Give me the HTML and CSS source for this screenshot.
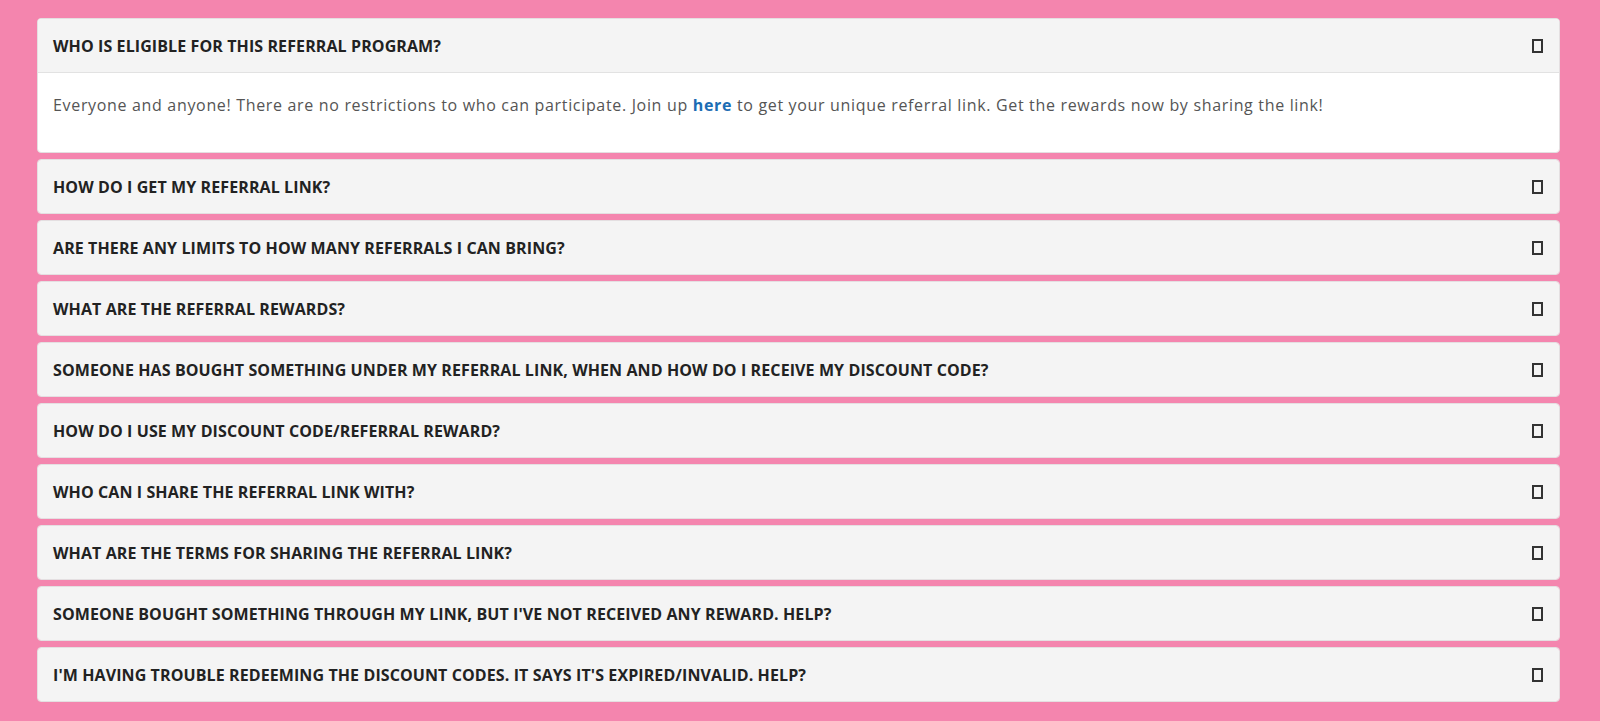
FILE: index.html
```html
<!DOCTYPE html>
<html lang="en">
	<head>
		<meta charset="utf-8" />
		<title>Referral program FAQ</title>
		<meta name="viewport" content="width=device-width, initial-scale=1.0">
		<link rel="stylesheet" href="styles.css">
	</head>
	<body>
		<div id="faq">
			<div class="card open">
				<div class="card-head">
					<span class="question">Who is eligible for this referral program?</span>
					<span class="toggle"></span>
				</div>
				<div class="card-body">
					<p>Everyone and anyone! There are no restrictions to who can participate. Join up <a href="#">here</a> to get your unique referral link. Get the rewards now by sharing the link!</p>
				</div>
			</div>
			<div class="card">
				<div class="card-head">
					<span class="question">How do I get my referral link?</span>
					<span class="toggle"></span>
				</div>
			</div>
			<div class="card">
				<div class="card-head">
					<span class="question">Are there any limits to how many referrals I can bring?</span>
					<span class="toggle"></span>
				</div>
			</div>
			<div class="card">
				<div class="card-head">
					<span class="question">What are the referral rewards?</span>
					<span class="toggle"></span>
				</div>
			</div>
			<div class="card">
				<div class="card-head">
					<span class="question">Someone has bought something under my referral link, when and how do I receive my discount code?</span>
					<span class="toggle"></span>
				</div>
			</div>
			<div class="card">
				<div class="card-head">
					<span class="question">How do I use my discount code/referral reward?</span>
					<span class="toggle"></span>
				</div>
			</div>
			<div class="card">
				<div class="card-head">
					<span class="question">Who can I share the referral link with?</span>
					<span class="toggle"></span>
				</div>
			</div>
			<div class="card">
				<div class="card-head">
					<span class="question">What are the terms for sharing the referral link?</span>
					<span class="toggle"></span>
				</div>
			</div>
			<div class="card">
				<div class="card-head">
					<span class="question">Someone bought something through my link, but I've not received any reward. Help?</span>
					<span class="toggle"></span>
				</div>
			</div>
			<div class="card">
				<div class="card-head">
					<span class="question">I'm having trouble redeeming the discount codes. It says it's expired/invalid. Help?</span>
					<span class="toggle"></span>
				</div>
			</div>
		</div>
	</body>
</html>
```
FILE: styles.css
```css
body, html {
	margin:0;
	padding:0;
	font-family:"Open Sans", Arial, sans-serif;
	background-color:#f485ae;
}
#faq {
	padding:18px 40px 13px 37px;
}
.card {
	margin-bottom:6px;
	border:1px solid #e4dfe1;
	border-radius:4px;
	background-color:#fff;
	overflow:hidden;
}
.card-head {
	display:flex;
	align-items:center;
	justify-content:space-between;
	height:53px;
	padding:0 16px 0 15px;
	background-color:#f4f4f4;
}
.open .card-head {
	border-bottom:1px solid #e2e2e2;
}
.question {
	font-size:16px;
	font-weight:700;
	letter-spacing:0.1px;
	text-transform:uppercase;
	color:#222;
}
.toggle {
	width:7px;
	height:10px;
	border:2px solid #333;
	margin-top:1px;
}
.card-body {
	padding:19px 15px 34px;
}
.card-body p {
	margin:0;
	font-size:16px;
	letter-spacing:0.67px;
	line-height:26px;
	color:#555;
}
.card-body a {
	color:#1b6db4;
	font-weight:700;
	text-decoration:none;
}
```
